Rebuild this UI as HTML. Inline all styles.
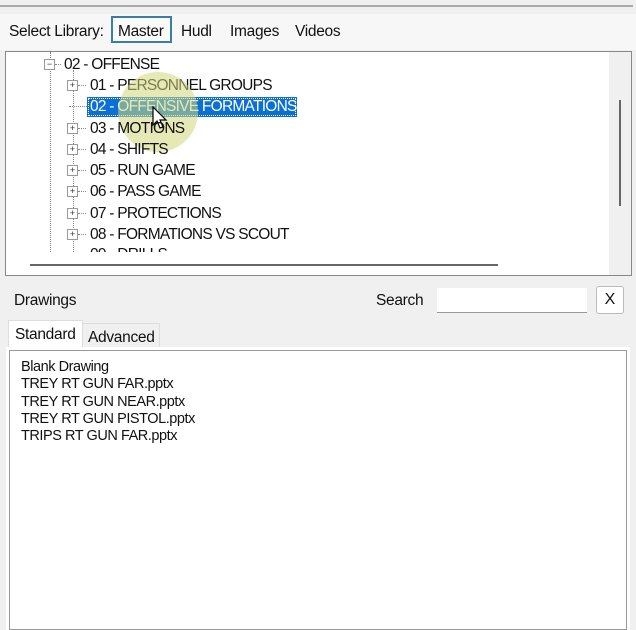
<!DOCTYPE html><html><head><style>
body{margin:0;width:636px;height:625px;background:#f0f0f0;font-family:"Liberation Sans",sans-serif;position:relative;overflow:hidden;color:#111}
.a{position:absolute;white-space:nowrap}
.t{font-size:15.5px;letter-spacing:-0.3px}
.tr{font-size:15.5px;letter-spacing:-0.75px}
.pb{position:absolute;width:9px;height:9px;border:1px solid #999;background:#fff;font-size:9px;line-height:9px;text-align:center;color:#333}
.dot{position:absolute;border-top:1px dotted #888;width:8px}
</style></head><body>
<div class="a" style="left:0;top:5px;width:633px;height:2px;background:#aaa"></div>
<div class="a" style="left:0;top:14px;width:636px;height:36px;background:#f7f7f7"></div>
<div class="a t" style="left:9px;top:23px">Select Library:</div>
<div class="a" style="left:111px;top:16px;width:61px;height:27px;border:2px solid #3a7ea8;box-sizing:border-box;background:#fafafa"></div>
<div class="a t" style="left:118px;top:23px">Master</div>
<div class="a t" style="left:181px;top:23px">Hudl</div>
<div class="a t" style="left:230px;top:23px">Images</div>
<div class="a t" style="left:295px;top:23px">Videos</div>
<div class="a" style="left:5px;top:51px;width:627px;height:225px;border:1px solid #888;box-sizing:border-box;background:#fff;overflow:hidden">
 <div class="a" style="right:0;top:0;width:22px;height:223px;background:#f0f0f0"></div>
 <div class="a" style="left:613px;top:48px;width:2px;height:106px;background:#666"></div>
 <div class="a" style="left:24px;top:212px;width:468px;height:2px;background:#666"></div>
 <div class="a" style="left:44px;top:0;height:200px;border-left:1px dotted #888"></div>
 <div class="a" style="left:67px;top:18px;height:182px;border-left:1px dotted #888"></div>
 <div class="a tr" style="left:84px;top:194px;height:6px;overflow:hidden">09 - DRILLS</div>
</div>
<div class="pb" style="left:44px;top:59px">−</div><div class="dot" style="left:55px;top:64px;width:6px"></div>
<div class="a tr" style="left:64px;top:56px">02 - OFFENSE</div>
<div class="pb" style="left:67px;top:80px">+</div><div class="dot" style="left:78px;top:85px;width:8px"></div>
<div class="a tr" style="left:90px;top:77px">01 - PERSONNEL GROUPS</div>
<div class="dot" style="left:69px;top:106px;width:18px"></div>
<div class="a" style="left:87px;top:97px;width:210px;height:20px;background:#0a6fd6;outline:1px dotted #fff;outline-offset:-2px"></div>
<div class="a tr" style="left:90px;top:98px;color:#fff">02 - OFFENSIVE FORMATIONS</div>
<div class="a" style="left:118px;top:72px;width:80px;height:80px;border-radius:50%;background:rgba(210,215,120,0.55)"></div>
<svg class="a" style="left:152px;top:106px" width="18" height="24"><path d="M1 1 L1 19 L5 15 L8 22 L11 21 L8 14 L14 14 Z" fill="#fff" stroke="#000" stroke-width="1.2"/></svg>
<div class="pb" style="left:67px;top:123px">+</div><div class="dot" style="left:78px;top:128px"></div>
<div class="a tr" style="left:90px;top:120px">03 - MOTIONS</div>
<div class="pb" style="left:67px;top:144px">+</div><div class="dot" style="left:78px;top:149px"></div>
<div class="a tr" style="left:90px;top:141px">04 - SHIFTS</div>
<div class="pb" style="left:67px;top:165px">+</div><div class="dot" style="left:78px;top:170px"></div>
<div class="a tr" style="left:90px;top:162px">05 - RUN GAME</div>
<div class="pb" style="left:67px;top:186px">+</div><div class="dot" style="left:78px;top:191px"></div>
<div class="a tr" style="left:90px;top:183px">06 - PASS GAME</div>
<div class="pb" style="left:67px;top:208px">+</div><div class="dot" style="left:78px;top:213px"></div>
<div class="a tr" style="left:90px;top:205px">07 - PROTECTIONS</div>
<div class="pb" style="left:67px;top:229px">+</div><div class="dot" style="left:78px;top:234px"></div>
<div class="a tr" style="left:90px;top:226px">08 - FORMATIONS VS SCOUT</div>
<div class="a t" style="left:14px;top:292px">Drawings</div>
<div class="a t" style="left:376px;top:292px">Search</div>
<div class="a" style="left:437px;top:288px;width:150px;height:24px;background:#fff;border-bottom:1px solid #999"></div>
<div class="a" style="left:596px;top:286px;width:28px;height:28px;background:#fff;border:1px solid #bbb;border-radius:3px;box-sizing:border-box;text-align:center;line-height:26px;font-size:16px">X</div>
<div class="a" style="left:8px;top:320px;width:73px;height:32px;background:#fff;border:1px solid #ddd;border-bottom:none"></div>
<div class="a t" style="left:15px;top:326px">Standard</div>
<div class="a" style="left:82px;top:323px;width:76px;height:28px;background:#f0f0f0;border:1px solid #ddd;border-bottom:none"></div>
<div class="a t" style="left:88px;top:329px">Advanced</div>
<div class="a" style="left:9px;top:350px;width:618px;height:280px;border:1px solid #999;box-sizing:border-box;background:#fff;outline:3px solid #fff;"></div>
<div class="a" style="left:21px;top:359px;font-size:14.5px;line-height:17.3px;letter-spacing:-0.45px">Blank Drawing<br>TREY RT GUN FAR.pptx<br>TREY RT GUN NEAR.pptx<br>TREY RT GUN PISTOL.pptx<br>TRIPS RT GUN FAR.pptx</div>
</body></html>
